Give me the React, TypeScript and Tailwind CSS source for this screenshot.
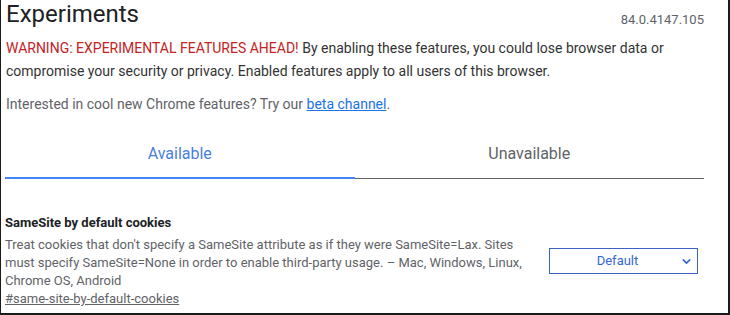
import React from 'react';
import { ChevronDown } from 'lucide-react';

const FeatureRow = () => (
  <div className="flex items-center justify-between mt-[35px]">
    <div className="w-[530px]">
      <h4 className="text-[13px] leading-[18px] font-bold text-[#202124]">SameSite by default cookies</h4>
      <p className="text-[13px] leading-[18px] text-[#5f6368] mt-[4px]">
        Treat cookies that don't specify a SameSite attribute as if they were SameSite=Lax. Sites must specify
        SameSite=None in order to enable third-party usage. – Mac, Windows, Linux, Chrome OS, Android
      </p>
      <a className="block text-[13px] leading-[18px] text-[#5f6368] underline">#same-site-by-default-cookies</a>
    </div>
    <div className="relative w-[149px] h-[26px] mr-[6px]">
      <select
        defaultValue="Default"
        className="w-full h-full appearance-none bg-white border border-[#3c63c4] text-[#3367d6] text-[13px] text-center pr-3 outline-none"
      >
        <option>Default</option>
        <option>Enabled</option>
        <option>Disabled</option>
      </select>
      <ChevronDown size={13} strokeWidth={3} className="absolute right-[5px] top-[7px] text-[#3367d6] pointer-events-none" />
    </div>
  </div>
);

export default function App() {
  return (
    <div className="w-[730px] h-[315px] overflow-hidden bg-white border-l border-r-2 border-b-2 border-[#1b1b1b] font-['Roboto',sans-serif]">
      <div className="pl-[4px] pr-[24px]">
        <div className="flex items-start justify-between">
          <h1 className="text-[24px] leading-[28px] text-[#202124] pl-px">Experiments</h1>
          <span className="text-[13px] leading-[18px] text-[#5f6368] mt-[11px]">84.0.4147.105</span>
        </div>

        <p className="text-[14px] leading-[23px] text-[#333] mt-[8px] pl-px">
          <span className="text-[#c5221f]">WARNING: EXPERIMENTAL FEATURES AHEAD!</span> By enabling these features, you could
          lose browser data or compromise your security or privacy. Enabled features apply to all users of this browser.
        </p>

        <p className="text-[14px] leading-[23px] text-[#5f6368] mt-[10px] pl-px">
          Interested in cool new Chrome features? Try our <a className="text-[#1a73e8] underline">beta channel</a>.
        </p>

        <div className="flex mt-[28px]">
          <div className="flex-1 border-b-2 border-[#4285f4] text-center text-[16px] leading-[20px] pb-[13px] text-[#4a80d9]">
            Available
          </div>
          <div className="flex-1 text-center text-[16px] leading-[20px] pb-[14px] text-[#5f6368] border-b border-[#5f6368] self-start">
            Unavailable
          </div>
        </div>

        <FeatureRow />
      </div>
    </div>
  );
}
